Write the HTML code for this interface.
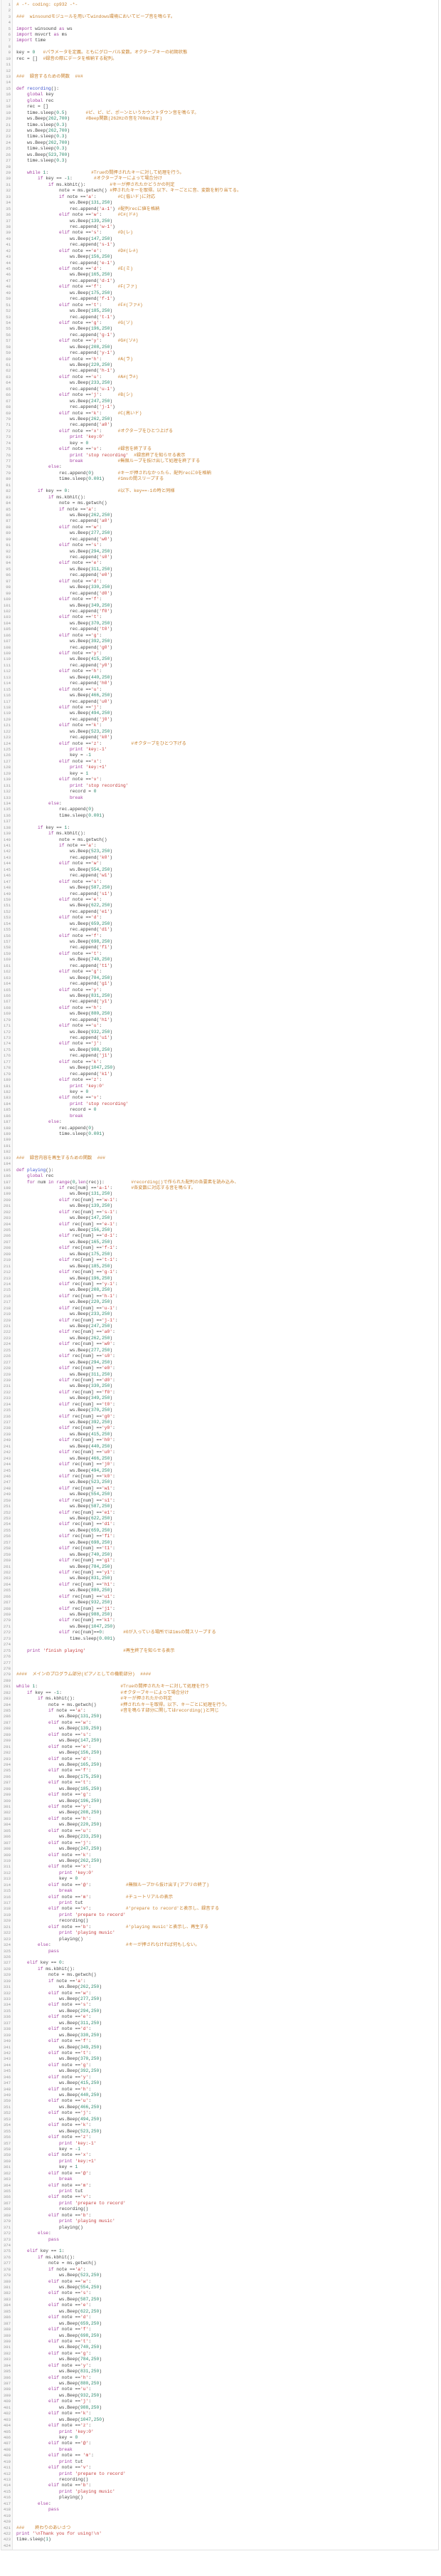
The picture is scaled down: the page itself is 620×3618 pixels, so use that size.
<!DOCTYPE html>
<html><head><meta charset="utf-8">
<style>
html,body{margin:0;padding:0;background:#fff;}
body{width:620px;height:3618px;position:relative;overflow:hidden;}
#box{position:absolute;left:1px;top:0;width:614px;height:3581px;border:1px solid #e2e2e2;border-top:none;background:#fff;}
#gut{position:absolute;left:0;top:0;width:15px;height:3581px;background:#f7f7f7;border-right:1px solid #e4e4e4;}
pre{margin:0;position:absolute;top:2.8px;font-family:"Liberation Mono","Noto Sans CJK JP",monospace;font-size:6.25px;line-height:8.44px;white-space:pre;}
#ln{left:0;width:13px;text-align:right;color:#9a9a9a;font-size:5.6px;}
#code{left:21px;color:#444;}
pre b,pre s,pre u,pre i,pre em{font-weight:normal;text-decoration:none;font-style:normal;}
pre b{color:#a33ea1;}
pre s{color:#c43c3c;}
pre u{color:#2e8a6e;}
pre i{color:#c9822f;}
pre em{color:#3f55cf;}
</style></head><body>
<div id="box"><div id="gut"></div>
<pre id="ln">1
2
3
4
5
6
7
8
9
10
11
12
13
14
15
16
17
18
19
20
21
22
23
24
25
26
27
28
29
30
31
32
33
34
35
36
37
38
39
40
41
42
43
44
45
46
47
48
49
50
51
52
53
54
55
56
57
58
59
60
61
62
63
64
65
66
67
68
69
70
71
72
73
74
75
76
77
78
79
80
81
82
83
84
85
86
87
88
89
90
91
92
93
94
95
96
97
98
99
100
101
102
103
104
105
106
107
108
109
110
111
112
113
114
115
116
117
118
119
120
121
122
123
124
125
126
127
128
129
130
131
132
133
134
135
136
137
138
139
140
141
142
143
144
145
146
147
148
149
150
151
152
153
154
155
156
157
158
159
160
161
162
163
164
165
166
167
168
169
170
171
172
173
174
175
176
177
178
179
180
181
182
183
184
185
186
187
188
189
190
191
192
193
194
195
196
197
198
199
200
201
202
203
204
205
206
207
208
209
210
211
212
213
214
215
216
217
218
219
220
221
222
223
224
225
226
227
228
229
230
231
232
233
234
235
236
237
238
239
240
241
242
243
244
245
246
247
248
249
250
251
252
253
254
255
256
257
258
259
260
261
262
263
264
265
266
267
268
269
270
271
272
273
274
275
276
277
278
279
280
281
282
283
284
285
286
287
288
289
290
291
292
293
294
295
296
297
298
299
300
301
302
303
304
305
306
307
308
309
310
311
312
313
314
315
316
317
318
319
320
321
322
323
324
325
326
327
328
329
330
331
332
333
334
335
336
337
338
339
340
341
342
343
344
345
346
347
348
349
350
351
352
353
354
355
356
357
358
359
360
361
362
363
364
365
366
367
368
369
370
371
372
373
374
375
376
377
378
379
380
381
382
383
384
385
386
387
388
389
390
391
392
393
394
395
396
397
398
399
400
401
402
403
404
405
406
407
408
409
410
411
412
413
414
415
416
417
418
419
420
421
422
423
424</pre>
<pre id="code"><i># -*- coding: cp932 -*-</i>

<i>###  winsoundモジュールを用いてwindows環境においてビープ音を鳴らす。</i>

<b>import</b> winsound <b>as</b> ws
<b>import</b> msvcrt <b>as</b> ms
<b>import</b> time

key = <u>0</u>   <i>#パラメータを定義。ともにグローバル変数。オクターブキーの初期状態</i>
rec = []  <i>#録音の際にデータを格納する配列。</i>


<i>###  録音するための関数  ###</i>

<b>def</b> <em>recording</em>():
    <b>global</b> key
    <b>global</b> rec
    rec = []
    time.sleep(<u>0.5</u>)       <i>#ピ、ピ、ピ、ポーンというカウントダウン音を鳴らす。</i>
    ws.Beep(<u>262</u>,<u>700</u>)      <i>#Beep関数(262Hzの音を700ms流す)</i>
    time.sleep(<u>0.3</u>)
    ws.Beep(<u>262</u>,<u>700</u>)
    time.sleep(<u>0.3</u>)
    ws.Beep(<u>262</u>,<u>700</u>)
    time.sleep(<u>0.3</u>)
    ws.Beep(<u>523</u>,<u>700</u>)
    time.sleep(<u>0.3</u>)

    <b>while</b> <u>1</u>:                <i>#Trueの間押されたキーに対して処理を行う。</i>
        <b>if</b> key == -<u>1</u>:        <i>#オクターブキーによって場合分け</i>
            <b>if</b> ms.kbhit():         <i>#キーが押されたかどうかの判定</i>
                note = ms.getwch() <i>#押されたキーを取得。以下、キーごとに音、変数を割り当てる。</i>
                <b>if</b> note ==<s>'a'</s>:        <i>#C(低いド)に対応</i>
                    ws.Beep(<u>131</u>,<u>250</u>)
                    rec.append(<s>'a-1'</s>) <i>#配列recに値を格納</i>
                <b>elif</b> note ==<s>'w'</s>:      <i>#C#(ド#)</i>
                    ws.Beep(<u>139</u>,<u>250</u>)
                    rec.append(<s>'w-1'</s>)
                <b>elif</b> note ==<s>'s'</s>:      <i>#D(レ)</i>
                    ws.Beep(<u>147</u>,<u>250</u>)
                    rec.append(<s>'s-1'</s>)
                <b>elif</b> note ==<s>'e'</s>:      <i>#D#(レ#)</i>
                    ws.Beep(<u>156</u>,<u>250</u>)
                    rec.append(<s>'e-1'</s>)
                <b>elif</b> note ==<s>'d'</s>:      <i>#E(ミ)</i>
                    ws.Beep(<u>165</u>,<u>250</u>)
                    rec.append(<s>'d-1'</s>)
                <b>elif</b> note ==<s>'f'</s>:      <i>#F(ファ)</i>
                    ws.Beep(<u>175</u>,<u>250</u>)
                    rec.append(<s>'f-1'</s>)
                <b>elif</b> note ==<s>'t'</s>:      <i>#F#(ファ#)</i>
                    ws.Beep(<u>185</u>,<u>250</u>)
                    rec.append(<s>'t-1'</s>)
                <b>elif</b> note ==<s>'g'</s>:      <i>#G(ソ)</i>
                    ws.Beep(<u>196</u>,<u>250</u>)
                    rec.append(<s>'g-1'</s>)
                <b>elif</b> note ==<s>'y'</s>:      <i>#G#(ソ#)</i>
                    ws.Beep(<u>208</u>,<u>250</u>)
                    rec.append(<s>'y-1'</s>)
                <b>elif</b> note ==<s>'h'</s>:      <i>#A(ラ)</i>
                    ws.Beep(<u>220</u>,<u>250</u>)
                    rec.append(<s>'h-1'</s>)
                <b>elif</b> note ==<s>'u'</s>:      <i>#A#(ラ#)</i>
                    ws.Beep(<u>233</u>,<u>250</u>)
                    rec.append(<s>'u-1'</s>)
                <b>elif</b> note ==<s>'j'</s>:      <i>#B(シ)</i>
                    ws.Beep(<u>247</u>,<u>250</u>)
                    rec.append(<s>'j-1'</s>)
                <b>elif</b> note ==<s>'k'</s>:      <i>#C(高いド)</i>
                    ws.Beep(<u>262</u>,<u>250</u>)
                    rec.append(<s>'a0'</s>)
                <b>elif</b> note ==<s>'x'</s>:      <i>#オクターブをひとつ上げる</i>
                    <b>print</b> <s>'key:0'</s>
                    key = <u>0</u>
                <b>elif</b> note ==<s>'v'</s>:      <i>#録音を終了する</i>
                    <b>print</b> <s>'stop recording'</s>  <i>#録音終了を知らせる表示</i>
                    <b>break</b>             <i>#無限ループを抜け出して処理を終了する</i>
            <b>else</b>:
                rec.append(<u>0</u>)         <i>#キーが押されなかったら、配列recに0を格納</i>
                time.sleep(<u>0.001</u>)     <i>#1msの間スリープする</i>

        <b>if</b> key == <u>0</u>:                  <i>#以下、key==-1の時と同様</i>
            <b>if</b> ms.kbhit():
                note = ms.getwch()
                <b>if</b> note ==<s>'a'</s>:
                    ws.Beep(<u>262</u>,<u>250</u>)
                    rec.append(<s>'a0'</s>)
                <b>elif</b> note ==<s>'w'</s>:
                    ws.Beep(<u>277</u>,<u>250</u>)
                    rec.append(<s>'w0'</s>)
                <b>elif</b> note ==<s>'s'</s>:
                    ws.Beep(<u>294</u>,<u>250</u>)
                    rec.append(<s>'s0'</s>)
                <b>elif</b> note ==<s>'e'</s>:
                    ws.Beep(<u>311</u>,<u>250</u>)
                    rec.append(<s>'e0'</s>)
                <b>elif</b> note ==<s>'d'</s>:
                    ws.Beep(<u>330</u>,<u>250</u>)
                    rec.append(<s>'d0'</s>)
                <b>elif</b> note ==<s>'f'</s>:
                    ws.Beep(<u>349</u>,<u>250</u>)
                    rec.append(<s>'f0'</s>)
                <b>elif</b> note ==<s>'t'</s>:
                    ws.Beep(<u>370</u>,<u>250</u>)
                    rec.append(<s>'t0'</s>)
                <b>elif</b> note ==<s>'g'</s>:
                    ws.Beep(<u>392</u>,<u>250</u>)
                    rec.append(<s>'g0'</s>)
                <b>elif</b> note ==<s>'y'</s>:
                    ws.Beep(<u>415</u>,<u>250</u>)
                    rec.append(<s>'y0'</s>)
                <b>elif</b> note ==<s>'h'</s>:
                    ws.Beep(<u>440</u>,<u>250</u>)
                    rec.append(<s>'h0'</s>)
                <b>elif</b> note ==<s>'u'</s>:
                    ws.Beep(<u>466</u>,<u>250</u>)
                    rec.append(<s>'u0'</s>)
                <b>elif</b> note ==<s>'j'</s>:
                    ws.Beep(<u>494</u>,<u>250</u>)
                    rec.append(<s>'j0'</s>)
                <b>elif</b> note ==<s>'k'</s>:
                    ws.Beep(<u>523</u>,<u>250</u>)
                    rec.append(<s>'k0'</s>)
                <b>elif</b> note ==<s>'z'</s>:           <i>#オクターブをひとつ下げる</i>
                    <b>print</b> <s>'key:-1'</s>
                    key = -<u>1</u>
                <b>elif</b> note ==<s>'x'</s>:
                    <b>print</b> <s>'key:+1'</s>
                    key = <u>1</u>
                <b>elif</b> note ==<s>'v'</s>:
                    <b>print</b> <s>'stop recording'</s>
                    record = <u>0</u>
                    <b>break</b>
            <b>else</b>:
                rec.append(<u>0</u>)
                time.sleep(<u>0.001</u>)

        <b>if</b> key == <u>1</u>:
            <b>if</b> ms.kbhit():
                note = ms.getwch()
                <b>if</b> note ==<s>'a'</s>:
                    ws.Beep(<u>523</u>,<u>250</u>)
                    rec.append(<s>'k0'</s>)
                <b>elif</b> note ==<s>'w'</s>:
                    ws.Beep(<u>554</u>,<u>250</u>)
                    rec.append(<s>'w1'</s>)
                <b>elif</b> note ==<s>'s'</s>:
                    ws.Beep(<u>587</u>,<u>250</u>)
                    rec.append(<s>'s1'</s>)
                <b>elif</b> note ==<s>'e'</s>:
                    ws.Beep(<u>622</u>,<u>250</u>)
                    rec.append(<s>'e1'</s>)
                <b>elif</b> note ==<s>'d'</s>:
                    ws.Beep(<u>659</u>,<u>250</u>)
                    rec.append(<s>'d1'</s>)
                <b>elif</b> note ==<s>'f'</s>:
                    ws.Beep(<u>698</u>,<u>250</u>)
                    rec.append(<s>'f1'</s>)
                <b>elif</b> note ==<s>'t'</s>:
                    ws.Beep(<u>740</u>,<u>250</u>)
                    rec.append(<s>'t1'</s>)
                <b>elif</b> note ==<s>'g'</s>:
                    ws.Beep(<u>784</u>,<u>250</u>)
                    rec.append(<s>'g1'</s>)
                <b>elif</b> note ==<s>'y'</s>:
                    ws.Beep(<u>831</u>,<u>250</u>)
                    rec.append(<s>'y1'</s>)
                <b>elif</b> note ==<s>'h'</s>:
                    ws.Beep(<u>880</u>,<u>250</u>)
                    rec.append(<s>'h1'</s>)
                <b>elif</b> note ==<s>'u'</s>:
                    ws.Beep(<u>932</u>,<u>250</u>)
                    rec.append(<s>'u1'</s>)
                <b>elif</b> note ==<s>'j'</s>:
                    ws.Beep(<u>988</u>,<u>250</u>)
                    rec.append(<s>'j1'</s>)
                <b>elif</b> note ==<s>'k'</s>:
                    ws.Beep(<u>1047</u>,<u>250</u>)
                    rec.append(<s>'k1'</s>)
                <b>elif</b> note ==<s>'z'</s>:
                    <b>print</b> <s>'key:0'</s>
                    key = <u>0</u>
                <b>elif</b> note ==<s>'v'</s>:
                    <b>print</b> <s>'stop recording'</s>
                    record = <u>0</u>
                    <b>break</b>
            <b>else</b>:
                rec.append(<u>0</u>)
                time.sleep(<u>0.001</u>)



<i>###  録音内容を再生するための関数  ###</i>

<b>def</b> <em>playing</em>():
    <b>global</b> rec
    <b>for</b> num <b>in</b> <b>range</b>(<u>0</u>,<b>len</b>(rec)):          <i>#recording()で作られた配列の各要素を読み込み、</i>
                <b>if</b> rec[num] ==<s>'a-1'</s>:       <i>#各変数に対応する音を鳴らす。</i>
                    ws.Beep(<u>131</u>,<u>250</u>)
                <b>elif</b> rec[num] ==<s>'w-1'</s>:
                    ws.Beep(<u>139</u>,<u>250</u>)
                <b>elif</b> rec[num] ==<s>'s-1'</s>:
                    ws.Beep(<u>147</u>,<u>250</u>)
                <b>elif</b> rec[num] ==<s>'e-1'</s>:
                    ws.Beep(<u>156</u>,<u>250</u>)
                <b>elif</b> rec[num] ==<s>'d-1'</s>:
                    ws.Beep(<u>165</u>,<u>250</u>)
                <b>elif</b> rec[num] ==<s>'f-1'</s>:
                    ws.Beep(<u>175</u>,<u>250</u>)
                <b>elif</b> rec[num] ==<s>'t-1'</s>:
                    ws.Beep(<u>185</u>,<u>250</u>)
                <b>elif</b> rec[num] ==<s>'g-1'</s>:
                    ws.Beep(<u>196</u>,<u>250</u>)
                <b>elif</b> rec[num] ==<s>'y-1'</s>:
                    ws.Beep(<u>208</u>,<u>250</u>)
                <b>elif</b> rec[num] ==<s>'h-1'</s>:
                    ws.Beep(<u>220</u>,<u>250</u>)
                <b>elif</b> rec[num] ==<s>'u-1'</s>:
                    ws.Beep(<u>233</u>,<u>250</u>)
                <b>elif</b> rec[num] ==<s>'j-1'</s>:
                    ws.Beep(<u>247</u>,<u>250</u>)
                <b>elif</b> rec[num] ==<s>'a0'</s>:
                    ws.Beep(<u>262</u>,<u>250</u>)
                <b>elif</b> rec[num] ==<s>'w0'</s>:
                    ws.Beep(<u>277</u>,<u>250</u>)
                <b>elif</b> rec[num] ==<s>'s0'</s>:
                    ws.Beep(<u>294</u>,<u>250</u>)
                <b>elif</b> rec[num] ==<s>'e0'</s>:
                    ws.Beep(<u>311</u>,<u>250</u>)
                <b>elif</b> rec[num] ==<s>'d0'</s>:
                    ws.Beep(<u>330</u>,<u>250</u>)
                <b>elif</b> rec[num] ==<s>'f0'</s>:
                    ws.Beep(<u>349</u>,<u>250</u>)
                <b>elif</b> rec[num] ==<s>'t0'</s>:
                    ws.Beep(<u>370</u>,<u>250</u>)
                <b>elif</b> rec[num] ==<s>'g0'</s>:
                    ws.Beep(<u>392</u>,<u>250</u>)
                <b>elif</b> rec[num] ==<s>'y0'</s>:
                    ws.Beep(<u>415</u>,<u>250</u>)
                <b>elif</b> rec[num] ==<s>'h0'</s>:
                    ws.Beep(<u>440</u>,<u>250</u>)
                <b>elif</b> rec[num] ==<s>'u0'</s>:
                    ws.Beep(<u>466</u>,<u>250</u>)
                <b>elif</b> rec[num] ==<s>'j0'</s>:
                    ws.Beep(<u>494</u>,<u>250</u>)
                <b>elif</b> rec[num] ==<s>'k0'</s>:
                    ws.Beep(<u>523</u>,<u>250</u>)
                <b>elif</b> rec[num] ==<s>'w1'</s>:
                    ws.Beep(<u>554</u>,<u>250</u>)
                <b>elif</b> rec[num] ==<s>'s1'</s>:
                    ws.Beep(<u>587</u>,<u>250</u>)
                <b>elif</b> rec[num] ==<s>'e1'</s>:
                    ws.Beep(<u>622</u>,<u>250</u>)
                <b>elif</b> rec[num] ==<s>'d1'</s>:
                    ws.Beep(<u>659</u>,<u>250</u>)
                <b>elif</b> rec[num] ==<s>'f1'</s>:
                    ws.Beep(<u>698</u>,<u>250</u>)
                <b>elif</b> rec[num] ==<s>'t1'</s>:
                    ws.Beep(<u>740</u>,<u>250</u>)
                <b>elif</b> rec[num] ==<s>'g1'</s>:
                    ws.Beep(<u>784</u>,<u>250</u>)
                <b>elif</b> rec[num] ==<s>'y1'</s>:
                    ws.Beep(<u>831</u>,<u>250</u>)
                <b>elif</b> rec[num] ==<s>'h1'</s>:
                    ws.Beep(<u>880</u>,<u>250</u>)
                <b>elif</b> rec[num] ==<s>'u1'</s>:
                    ws.Beep(<u>932</u>,<u>250</u>)
                <b>elif</b> rec[num] ==<s>'j1'</s>:
                    ws.Beep(<u>988</u>,<u>250</u>)
                <b>elif</b> rec[num] ==<s>'k1'</s>:
                    ws.Beep(<u>1047</u>,<u>250</u>)
                <b>elif</b> rec[num]==<u>0</u>:       <i>#0が入っている場所では1msの間スリープする</i>
                    time.sleep(<u>0.001</u>)

    <b>print</b> <s>'finish playing'</s>              <i>#再生終了を知らせる表示</i>



<i>####  メインのプログラム部分(ピアノとしての機能部分)  ####</i>

<b>while</b> <u>1</u>:                               <i>#Trueの間押されたキーに対して処理を行う</i>
    <b>if</b> key == -<u>1</u>:                      <i>#オクターブキーによって場合分け</i>
        <b>if</b> ms.kbhit():                 <i>#キーが押されたかの判定</i>
            note = ms.getwch()         <i>#押されたキーを取得。以下、キーごとに処理を行う。</i>
            <b>if</b> note ==<s>'a'</s>:             <i>#音を鳴らす部分に関してはrecording()と同じ</i>
                ws.Beep(<u>131</u>,<u>250</u>)
            <b>elif</b> note ==<s>'w'</s>:
                ws.Beep(<u>139</u>,<u>250</u>)
            <b>elif</b> note ==<s>'s'</s>:
                ws.Beep(<u>147</u>,<u>250</u>)
            <b>elif</b> note ==<s>'e'</s>:
                ws.Beep(<u>156</u>,<u>250</u>)
            <b>elif</b> note ==<s>'d'</s>:
                ws.Beep(<u>165</u>,<u>250</u>)
            <b>elif</b> note ==<s>'f'</s>:
                ws.Beep(<u>175</u>,<u>250</u>)
            <b>elif</b> note ==<s>'t'</s>:
                ws.Beep(<u>185</u>,<u>250</u>)
            <b>elif</b> note ==<s>'g'</s>:
                ws.Beep(<u>196</u>,<u>250</u>)
            <b>elif</b> note ==<s>'y'</s>:
                ws.Beep(<u>208</u>,<u>250</u>)
            <b>elif</b> note ==<s>'h'</s>:
                ws.Beep(<u>220</u>,<u>250</u>)
            <b>elif</b> note ==<s>'u'</s>:
                ws.Beep(<u>233</u>,<u>250</u>)
            <b>elif</b> note ==<s>'j'</s>:
                ws.Beep(<u>247</u>,<u>250</u>)
            <b>elif</b> note ==<s>'k'</s>:
                ws.Beep(<u>262</u>,<u>250</u>)
            <b>elif</b> note ==<s>'x'</s>:
                <b>print</b> <s>'key:0'</s>
                key = <u>0</u>
            <b>elif</b> note ==<s>'@'</s>:             <i>#無限ループから抜け出す(アプリの終了)</i>
                <b>break</b>
            <b>elif</b> note ==<s>'m'</s>:             <i>#チュートリアルの表示</i>
                <b>print</b> tut
            <b>elif</b> note ==<s>'v'</s>:             <i>#'prepare to record'と表示し、録音する</i>
                <b>print</b> <s>'prepare to record'</s>
                recording()
            <b>elif</b> note ==<s>'b'</s>:             <i>#'playing music'と表示し、再生する</i>
                <b>print</b> <s>'playing music'</s>
                playing()
        <b>else</b>:                            <i>#キーが押されなければ何もしない。</i>
            <b>pass</b>

    <b>elif</b> key == <u>0</u>:
        <b>if</b> ms.kbhit():
            note = ms.getwch()
            <b>if</b> note ==<s>'a'</s>:
                ws.Beep(<u>262</u>,<u>250</u>)
            <b>elif</b> note ==<s>'w'</s>:
                ws.Beep(<u>277</u>,<u>250</u>)
            <b>elif</b> note ==<s>'s'</s>:
                ws.Beep(<u>294</u>,<u>250</u>)
            <b>elif</b> note ==<s>'e'</s>:
                ws.Beep(<u>311</u>,<u>250</u>)
            <b>elif</b> note ==<s>'d'</s>:
                ws.Beep(<u>330</u>,<u>250</u>)
            <b>elif</b> note ==<s>'f'</s>:
                ws.Beep(<u>349</u>,<u>250</u>)
            <b>elif</b> note ==<s>'t'</s>:
                ws.Beep(<u>370</u>,<u>250</u>)
            <b>elif</b> note ==<s>'g'</s>:
                ws.Beep(<u>392</u>,<u>250</u>)
            <b>elif</b> note ==<s>'y'</s>:
                ws.Beep(<u>415</u>,<u>250</u>)
            <b>elif</b> note ==<s>'h'</s>:
                ws.Beep(<u>440</u>,<u>250</u>)
            <b>elif</b> note ==<s>'u'</s>:
                ws.Beep(<u>466</u>,<u>250</u>)
            <b>elif</b> note ==<s>'j'</s>:
                ws.Beep(<u>494</u>,<u>250</u>)
            <b>elif</b> note ==<s>'k'</s>:
                ws.Beep(<u>523</u>,<u>250</u>)
            <b>elif</b> note ==<s>'z'</s>:
                <b>print</b> <s>'key:-1'</s>
                key = -<u>1</u>
            <b>elif</b> note ==<s>'x'</s>:
                <b>print</b> <s>'key:+1'</s>
                key = <u>1</u>
            <b>elif</b> note ==<s>'@'</s>:
                <b>break</b>
            <b>elif</b> note ==<s>'m'</s>:
                <b>print</b> tut
            <b>elif</b> note ==<s>'v'</s>:
                <b>print</b> <s>'prepare to record'</s>
                recording()
            <b>elif</b> note ==<s>'b'</s>:
                <b>print</b> <s>'playing music'</s>
                playing()
        <b>else</b>:
            <b>pass</b>

    <b>elif</b> key == <u>1</u>:
        <b>if</b> ms.kbhit():
            note = ms.getwch()
            <b>if</b> note ==<s>'a'</s>:
                ws.Beep(<u>523</u>,<u>250</u>)
            <b>elif</b> note ==<s>'w'</s>:
                ws.Beep(<u>554</u>,<u>250</u>)
            <b>elif</b> note ==<s>'s'</s>:
                ws.Beep(<u>587</u>,<u>250</u>)
            <b>elif</b> note ==<s>'e'</s>:
                ws.Beep(<u>622</u>,<u>250</u>)
            <b>elif</b> note ==<s>'d'</s>:
                ws.Beep(<u>659</u>,<u>250</u>)
            <b>elif</b> note ==<s>'f'</s>:
                ws.Beep(<u>698</u>,<u>250</u>)
            <b>elif</b> note ==<s>'t'</s>:
                ws.Beep(<u>740</u>,<u>250</u>)
            <b>elif</b> note ==<s>'g'</s>:
                ws.Beep(<u>784</u>,<u>250</u>)
            <b>elif</b> note ==<s>'y'</s>:
                ws.Beep(<u>831</u>,<u>250</u>)
            <b>elif</b> note ==<s>'h'</s>:
                ws.Beep(<u>880</u>,<u>250</u>)
            <b>elif</b> note ==<s>'u'</s>:
                ws.Beep(<u>932</u>,<u>250</u>)
            <b>elif</b> note ==<s>'j'</s>:
                ws.Beep(<u>988</u>,<u>250</u>)
            <b>elif</b> note ==<s>'k'</s>:
                ws.Beep(<u>1047</u>,<u>250</u>)
            <b>elif</b> note ==<s>'z'</s>:
                <b>print</b> <s>'key:0'</s>
                key = <u>0</u>
            <b>elif</b> note ==<s>'@'</s>:
                <b>break</b>
            <b>elif</b> note == <s>'m'</s>:
                <b>print</b> tut
            <b>elif</b> note ==<s>'v'</s>:
                <b>print</b> <s>'prepare to record'</s>
                recording()
            <b>elif</b> note ==<s>'b'</s>:
                <b>print</b> <s>'playing music'</s>
                playing()
        <b>else</b>:
            <b>pass</b>


<i>###    終わりのあいさつ</i>
<b>print</b> <s>'\nThank you for using!\n'</s>
time.sleep(<u>1</u>)
</pre>
</div>
</body></html>
